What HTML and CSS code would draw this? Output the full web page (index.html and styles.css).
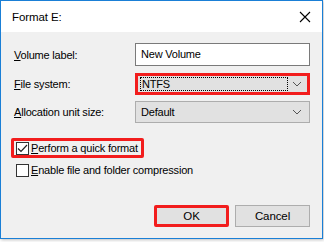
FILE: index.html
```html
<!DOCTYPE html>
<html lang="en">
<head>
    <meta charset="UTF-8">
    <title>Format E:</title>
    <link rel="stylesheet" href="styles.css">
</head>
<body>
    <div class="dialog">
        <div class="titlebar">
            <span class="title">Format E:</span>
            <svg class="close" width="12" height="12" viewBox="0 0 12 12">
                <path d="M1 1L11 11M11 1L1 11" stroke="#000" stroke-width="1.1" fill="none"/>
            </svg>
        </div>

        <div class="content">
            <div class="row">
                <label class="label"><u>V</u>olume label:</label>
                <div class="textbox">New Volume</div>
            </div>
            <div class="row row-fs">
                <label class="label"><u>F</u>ile system:</label>
                <div class="combo combo-marked">
                    <span class="focus">NTFS</span>
                    <svg class="chevron" width="10" height="6" viewBox="0 0 10 6">
                        <path d="M1 1L5 5L9 1" stroke="#555" stroke-width="1" fill="none"/>
                    </svg>
                </div>
            </div>
            <div class="row row-alloc">
                <label class="label"><u>A</u>llocation unit size:</label>
                <div class="combo">
                    <span class="value">Default</span>
                    <svg class="chevron" width="10" height="6" viewBox="0 0 10 6">
                        <path d="M1 1L5 5L9 1" stroke="#555" stroke-width="1" fill="none"/>
                    </svg>
                </div>
            </div>

            <div class="options">
                <div class="check check-marked">
                    <span class="box">
                        <svg width="11" height="11" viewBox="0 0 11 11">
                            <path d="M1 5.5L4 8.5L10 2" stroke="#222" stroke-width="1.2" fill="none"/>
                        </svg>
                    </span>
                    <span><u>P</u>erform a quick format</span>
                </div>
                <div class="check">
                    <span class="box"></span>
                    <span><u>E</u>nable file and folder compression</span>
                </div>
            </div>

            <div class="buttons">
                <button class="btn btn-marked">OK</button>
                <button class="btn">Cancel</button>
            </div>
        </div>
    </div>
</body>
</html>
```

FILE: styles.css
```css
* {
    margin: 0;
    padding: 0;
    box-sizing: border-box;
}

body {
    width: 324px;
    height: 242px;
    background: #ffffff;
    font-family: "Liberation Sans", Arial, sans-serif;
    font-size: 11px;
    letter-spacing: -0.2px;
    color: #000;
}

.dialog {
    width: 323px;
    height: 239px;
    border: 1px solid #1a7fd6;
    background: #f0f0f0;
    box-shadow: 1px 1px 3px rgba(0, 0, 0, 0.25);
}

.titlebar {
    height: 31px;
    background: #fff;
    display: flex;
    align-items: center;
    justify-content: space-between;
    padding: 0 11px 0 11px;
}

.title {
    font-size: 11.5px;
    letter-spacing: -0.1px;
    padding-top: 1px;
}

.content {
    padding: 11px 12px 0 13px;
}

.row {
    display: flex;
    align-items: center;
    height: 23px;
}

.row-fs {
    margin-top: 6px;
}

.row-alloc {
    margin-top: 5px;
}

.label {
    width: 121px;
    padding-top: 1px;
}

.textbox {
    width: 175px;
    height: 23px;
    background: #fff;
    border: 1px solid #7a7a7a;
    padding: 4px 0 0 5px;
}

.combo {
    width: 175px;
    height: 22px;
    background: #e1e1e1;
    border: 1px solid #adadad;
    display: flex;
    align-items: center;
    justify-content: space-between;
    padding: 0 7px 0 4px;
}

.combo-marked {
    border: 3px solid #f21d1d;
    padding: 0 5px 0 2px;
}

.focus {
    width: 148px;
    height: 14px;
    border: 1px dotted #000;
    line-height: 12px;
    padding-left: 1px;
}

.value {
    padding-left: 1px;
}

.options {
    margin-top: 15px;
    display: flex;
    flex-direction: column;
    gap: 2px;
}

.check {
    display: flex;
    align-items: center;
    gap: 2px;
    height: 20px;
    padding-left: 2px;
    white-space: nowrap;
}

.check-marked {
    width: 133px;
    margin-left: -3px;
    padding-left: 2px;
    border: 3px solid #f21d1d;
    border-radius: 2px;
}

.box {
    width: 13px;
    height: 13px;
    background: #fff;
    border: 1px solid #333;
    display: flex;
    align-items: center;
    justify-content: center;
}

.buttons {
    margin-top: 25px;
    display: flex;
    justify-content: flex-end;
    gap: 6px;
}

.btn {
    width: 75px;
    height: 22px;
    background: #e1e1e1;
    border: 1px solid #adadad;
    font-family: inherit;
    font-size: 11.5px;
    letter-spacing: -0.1px;
    color: #000;
}

.btn-marked {
    border: 3px solid #f21d1d;
    border-radius: 2px;
}
```
